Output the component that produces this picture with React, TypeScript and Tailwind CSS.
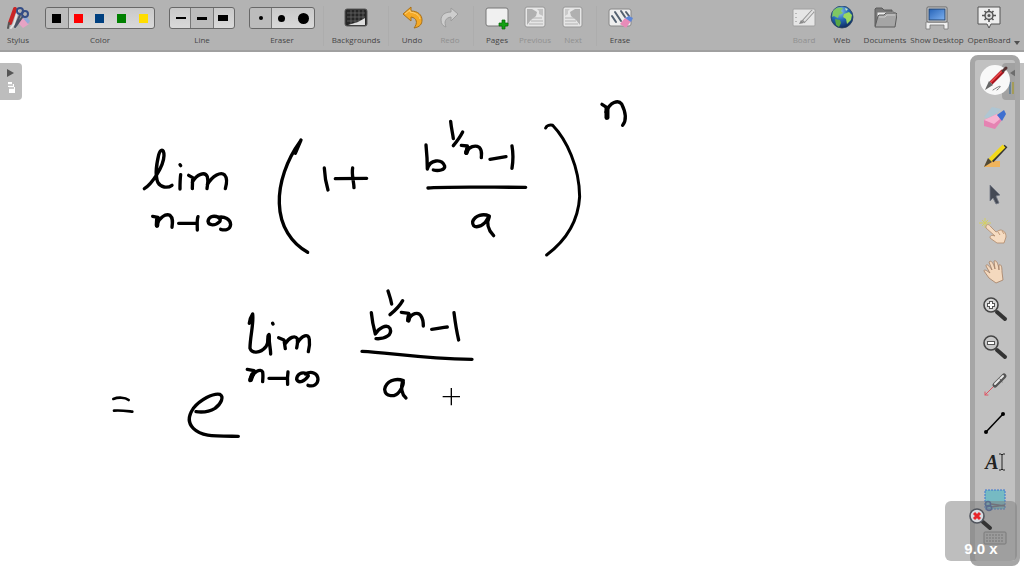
import type { ReactNode } from "react";

function StylusIcon() {
  return (
    <svg viewBox="0 0 24 24" className="size-6" fill="none" strokeLinecap="round">
      <path d="M12 17L17 12L23 18L17 22Z" fill="#e6a3c4" />
      <path d="M17 12L20 10L24 15L22 18Z" fill="#8fa9d8" />
      <path d="M9 3L4 17" stroke="#c92525" strokeWidth="4" />
      <path d="M3 17L2 22" stroke="#555" strokeWidth="2" />
      <path d="M12 4L8 18L5 22" stroke="#e5e5e5" strokeWidth="2" />
      <path d="M14 9L9 21M17 10L10 20" stroke="#4a5365" strokeWidth="2" />
      <circle cx="14" cy="5" r="3" stroke="#344d86" strokeWidth="2" />
      <circle cx="19" cy="8" r="3" stroke="#344d86" strokeWidth="2" />
    </svg>
  );
}

function BackgroundsIcon() {
  return (
    <svg viewBox="0 0 24 24" className="size-6">
      <rect x="1" y="3" width="22" height="17" rx="2" fill="#262626" stroke="#5a5a5a" />
      <path d="M3 7H21M3 11H21M3 15H17M7 4V19M11 4V18M15 4V17M19 4V13" stroke="#666" strokeWidth="0.8" />
      <path d="M4 19L14 16L21 12V19Z" fill="#dedede" />
    </svg>
  );
}

function UndoIcon() {
  return (
    <svg viewBox="0 0 24 24" className="size-6">
      <path
        d="M3 8L11 1V5C18 5 22 9 22 14C22 18 20 21 14 22C18 17 17 12 11 11V15Z"
        fill="#f5a925"
        stroke="#a87018"
        strokeLinejoin="round"
      />
      <path d="M5 8L10 4V6C16 7 19 9 20 13" fill="none" stroke="#ffd27a" />
    </svg>
  );
}

function RedoIcon() {
  return (
    <svg viewBox="0 0 24 24" className="size-6">
      <path
        d="M20 8L13 2V6C7 6 3 9 3 14C3 18 5 20 8 21C6 16 7 12 13 11V15Z"
        fill="#cdcdcd"
        stroke="#9c9c9c"
        strokeLinejoin="round"
      />
    </svg>
  );
}

function PagesIcon() {
  return (
    <svg viewBox="0 0 26 24" className="h-6 w-[26px]">
      <rect x="2" y="2" width="22" height="18" rx="2" fill="#f0f0f0" stroke="#777" />
      <path d="M18 14H21V17H24V20H21V23H18V20H15V17H18Z" fill="#12a012" stroke="#076507" strokeWidth="0.7" />
    </svg>
  );
}

function PreviousIcon() {
  return (
    <svg viewBox="0 0 24 24" className="size-6">
      <rect x="2" y="1" width="20" height="20" rx="2" fill="#e6e6e6" stroke="#999" />
      <path d="M4 3H9L14 6L13 10L8 14L4 19Z" fill="#b0b0b0" />
      <path d="M14 3H20V10L16 8V5Z" fill="#c2c2c2" />
      <path d="M10 12H19M8 15H20M6 18H20" stroke="#b2b2b2" strokeWidth="1" />
    </svg>
  );
}

function NextIcon() {
  return (
    <svg viewBox="0 0 24 24" className="size-6">
      <rect x="2" y="1" width="19" height="20" rx="2" fill="#e6e6e6" stroke="#999" />
      <path d="M19 3H14L9 6L10 10L15 14L19 19Z" fill="#b0b0b0" />
      <path d="M9 3H4V10L7 8V5Z" fill="#c9c9c9" />
      <path d="M4 12H13M4 15H15M4 18H17" stroke="#b2b2b2" strokeWidth="1" />
    </svg>
  );
}

function EraseIcon() {
  return (
    <svg viewBox="0 0 26 24" className="h-6 w-[26px]">
      <rect x="2" y="3" width="22" height="17" rx="2" fill="#eee" stroke="#888" />
      <path d="M5 10L9 16M8 6L14 15M14 5L18 11M19 6L22 10" stroke="#53606f" strokeWidth="2" strokeLinecap="round" />
      <path d="M13 18L18 12L24 15L19 22Z" fill="#e88cb9" />
      <path d="M18 12L22 10L26 12L24 16Z" fill="#5d86d8" />
    </svg>
  );
}

function BoardIcon() {
  return (
    <svg viewBox="0 0 24 24" className="size-6">
      <rect x="1" y="3" width="22" height="17" rx="1" fill="#e6e6e6" stroke="#a0a0a0" />
      <path d="M4 7V8M4 11V12M4 15V16" stroke="#888" strokeWidth="1" />
      <path d="M21 5L11 16" stroke="#929292" strokeWidth="4" />
      <path d="M21 5L12 15" stroke="#e2e2e2" strokeWidth="2" />
      <path d="M9 14L12 17L7 18Z" fill="#888" />
    </svg>
  );
}

function WebIcon() {
  return (
    <svg viewBox="0 0 24 24" className="size-6">
      <defs>
        <radialGradient id="globe" cx="0.4" cy="0.25" r="0.8">
          <stop offset="0" stopColor="#8cc3f2" />
          <stop offset="0.5" stopColor="#2467b4" />
          <stop offset="1" stopColor="#0b2454" />
        </radialGradient>
      </defs>
      <circle cx="12" cy="11" r="11" fill="url(#globe)" stroke="#27415f" strokeWidth="0.8" />
      <path d="M3 5C6 1 10 1 13 2L11 5L13 7L9 9L8 12L4 10L2 11Z" fill="#7fc763" />
      <path d="M5 13L10 14L11 17L9 21L6 19Z" fill="#58a743" />
      <path d="M14 8L19 6L22 9L21 14L17 18L16 13L13 11Z" fill="#9ad85f" />
      <path d="M15 2L18 3L16 5Z" fill="#c8e6c0" />
    </svg>
  );
}

function DocumentsIcon() {
  return (
    <svg viewBox="0 0 24 24" className="size-6">
      <path d="M2 20V3L3 2H9L11 4H19V8" fill="#777" stroke="#5c5c5c" strokeLinejoin="round" />
      <path d="M4 18V6H21V18" fill="#ededed" stroke="#777" />
      <path d="M2 21L5 10L6 9H11L13 7H23L24 8L22 21Z" fill="#a5a5a5" stroke="#5c5c5c" strokeLinejoin="round" />
      <path d="M6 11H12L14 9H22" fill="none" stroke="#ccc" />
    </svg>
  );
}

function DesktopIcon() {
  return (
    <svg viewBox="0 0 24 24" className="size-6">
      <defs>
        <linearGradient id="screen" x1="0" y1="0" x2="1" y2="1">
          <stop offset="0" stopColor="#2563b8" />
          <stop offset="1" stopColor="#80b2f0" />
        </linearGradient>
      </defs>
      <path d="M1 16H23V23H19V19H5V23H1Z" fill="#f0f0f0" stroke="#777" strokeWidth="0.8" />
      <rect x="2" y="1" width="20" height="15" rx="1" fill="#d8d8d8" stroke="#666" />
      <rect x="4" y="3" width="16" height="11" fill="url(#screen)" stroke="#24446f" />
    </svg>
  );
}

function OpenBoardIcon() {
  return (
    <svg viewBox="0 0 24 24" className="size-6">
      <path d="M1 1H23V18H14L12 22L10 18H1Z" fill="#eee" stroke="#555" strokeLinejoin="round" />
      <path d="M12 3V16M5 9.500H19M7.500 5L16.500 14M16.500 5L7.500 14" stroke="#555" strokeWidth="1.600" />
      <circle cx="12" cy="9.500" r="4" fill="#ddd" stroke="#555" strokeWidth="1.500" />
      <circle cx="12" cy="9.500" r="1.500" fill="#555" />
    </svg>
  );
}

type ToolProps = { label: string; icon: ReactNode; width: string; disabled?: boolean };

function Tool({ label, icon, width, disabled }: ToolProps) {
  return (
    <button
      type="button"
      disabled={disabled}
      className={`flex shrink-0 flex-col items-center gap-1 text-[#454545] disabled:text-[#909090] ${width}`}
    >
      <span className="flex h-6 items-center">{icon}</span>
      <span className="whitespace-nowrap text-[8px] leading-3">{label}</span>
    </button>
  );
}

type Option = { name: string; mark: string };

function OptionGroup({ label, options, selected, width }: { label: string; options: Option[]; selected: number; width: string }) {
  return (
    <div role="group" aria-label={label} className={`flex shrink-0 flex-col items-center gap-1 ${width}`}>
      <div className="flex h-6 w-full items-center">
        <div className="flex w-full overflow-hidden rounded-[3px] border border-[#686868] bg-linear-to-b from-[#c9c9c9] to-[#d9d9d9]">
          {options.map((o, i) => (
            <button
              key={o.name}
              type="button"
              aria-label={o.name}
              aria-pressed={i === selected}
              className={`flex h-5 flex-1 items-center justify-center ${
                i === selected ? "bg-[#bcbcbc] shadow-[0_0_0_1px_#777]" : ""
              }`}
            >
              <span className={o.mark} />
            </button>
          ))}
        </div>
      </div>
      <span className="text-[8px] leading-3 text-[#454545]">{label}</span>
    </div>
  );
}

const colors: Option[] = [
  { name: "Black", mark: "size-[9px] bg-black" },
  { name: "Red", mark: "size-[9px] bg-[#ff0000]" },
  { name: "Blue", mark: "size-[9px] bg-[#004080]" },
  { name: "Green", mark: "size-[9px] bg-[#008000]" },
  { name: "Yellow", mark: "size-[9px] bg-[#ffdd00]" },
];

const lines: Option[] = [
  { name: "Fine line", mark: "h-[2px] w-[10px] bg-black" },
  { name: "Medium line", mark: "h-[3px] w-[10px] bg-black" },
  { name: "Strong line", mark: "h-[6px] w-[10px] bg-black" },
];

const erasers: Option[] = [
  { name: "Small eraser", mark: "size-[4px] rounded-full bg-black" },
  { name: "Medium eraser", mark: "size-[7px] rounded-full bg-black" },
  { name: "Large eraser", mark: "size-[11px] rounded-full bg-black" },
];

function Divider() {
  return <div className="mx-1 h-10 w-px shrink-0 bg-[#adadad]" />;
}

function Toolbar() {
  return (
    <header className="flex h-[52px] shrink-0 items-start border-b-2 border-[#a0a0a0] bg-[#b3b3b3] pt-[6px]">
      <Tool label="Stylus" icon={<StylusIcon />} width="w-9" />
      <div className="ml-[9px] flex gap-[14px]">
        <OptionGroup label="Color" options={colors} selected={0} width="w-[110px]" />
        <OptionGroup label="Line" options={lines} selected={1} width="w-[66px]" />
        <OptionGroup label="Eraser" options={erasers} selected={0} width="w-[66px]" />
      </div>
      <div className="ml-1 flex">
        <Divider />
        <Tool label="Backgrounds" icon={<BackgroundsIcon />} width="w-14" />
        <Divider />
        <Tool label="Undo" icon={<UndoIcon />} width="w-[38px]" />
        <Tool label="Redo" icon={<RedoIcon />} width="w-[38px]" disabled />
        <Divider />
        <Tool label="Pages" icon={<PagesIcon />} width="w-[38px]" />
        <Tool label="Previous" icon={<PreviousIcon />} width="w-[38px]" disabled />
        <Tool label="Next" icon={<NextIcon />} width="w-[38px]" disabled />
        <Divider />
        <Tool label="Erase" icon={<EraseIcon />} width="w-[38px]" />
      </div>
      <div className="ml-auto flex">
        <Tool label="Board" icon={<BoardIcon />} width="w-[38px]" disabled />
        <Tool label="Web" icon={<WebIcon />} width="w-[38px]" />
        <Tool label="Documents" icon={<DocumentsIcon />} width="w-12" />
        <Tool label="Show Desktop" icon={<DesktopIcon />} width="w-14" />
        <Tool label="OpenBoard" icon={<OpenBoardIcon />} width="w-12" />
        <svg viewBox="0 0 8 6" className="mt-[34px] mr-[3px] h-[6px] w-2">
          <path d="M1 1H7L4 5Z" fill="#505050" />
        </svg>
      </div>
    </header>
  );
}

function Ink() {
  return (
    <svg
      viewBox="0 52 1024 524"
      preserveAspectRatio="xMinYMin meet"
      className="w-full"
      fill="none"
      stroke="#000"
      strokeWidth="10"
      strokeLinecap="round"
      strokeLinejoin="round"
    >
      <g transform="translate(130 120) scale(0.3333)">
        <path d="M43 206C65 193 101 140 102 107C102 84 91 86 86 105C80 130 75 170 84 188C92 202 112 206 126 196" />
        <path d="M152 164C150 180 150 195 150 207M150 134L152 137" />
        <path d="M176 166L188 173L187 206M187 187C200 162 225 154 232 170C236 183 232 195 231 206M232 194C248 166 273 154 284 165C293 175 290 192 286 206" />
        <path d="M68 289L84 292C84 303 78 308 81 318M80 314C90 292 106 280 120 286C130 294 128 308 126 322" />
        <path d="M82 298L81 316" strokeWidth="14" />
        <path d="M146 310H200M204 290C200 300 202 318 202 330" />
        <path d="M266 292C248 284 236 292 234 304C236 318 256 318 270 304C272 298 270 294 264 292C284 288 302 298 302 314C300 330 285 332 272 328" />
        <path d="M513 60L496 100M511 64C470 120 446 190 448 250C450 320 485 370 533 397" />
        <path d="M583 144C584 165 588 190 594 210M616 176L710 175M668 144C664 165 672 185 672 203" />
      </g>
      <g transform="translate(390 80) scale(0.3333)">
        <path d="M108 195C110 215 112 240 112 267C120 238 155 235 164 258C166 270 145 274 130 270" />
        <path d="M182 124C184 145 188 160 190 176M218 156C210 172 200 185 190 197" />
        <path d="M214 196L232 198L228 220M228 216C238 200 255 194 268 202C278 212 274 222 274 233" />
        <path d="M234 204L229 218" strokeWidth="14" />
        <path d="M300 238L348 230M366 198C370 220 370 240 366 265" />
        <path d="M114 324C160 319 300 322 407 322" />
        <path d="M298 408C280 400 255 405 248 425C246 447 270 443 285 428C295 415 297 405 298 410C288 430 295 450 311 467" />
        <path d="M467 144C470 136 480 134 488 136C530 180 568 260 569 350C565 420 530 480 470 525" strokeWidth="9" />
        <path d="M636 73L650 82L650 114M648 96C660 66 685 58 695 72C708 98 712 118 698 136" />
        <path d="M651 86V112" strokeWidth="15" />
      </g>
      <g transform="translate(90 280) scale(0.3333)">
        <path d="M478 130C480 115 486 105 488 102C492 130 480 170 480 205C485 220 510 222 528 200C534 190 536 175 537 163C536 185 542 205 542 222M548 130L549 132" />
        <path d="M536 168L535 192" strokeWidth="14" />
        <path d="M566 173L582 180L586 206M586 191C598 172 615 165 622 176C624 188 622 195 620 204M622 190C636 164 656 160 658 178C660 192 658 205 655 215" />
        <path d="M472 268L492 272C490 285 478 290 480 302C490 275 512 264 518 276C520 290 518 298 518 305" />
        <path d="M487 284L482 299" strokeWidth="14" />
        <path d="M537 295H590M594 276C592 290 592 300 593 313" />
        <path d="M650 281C634 274 620 284 620 298C626 312 645 304 655 288C654 280 650 280 646 282C666 270 684 282 684 298C684 312 670 322 654 316" />
        <path d="M70 357C85 351 105 352 116 360M72 392C90 390 110 393 127 395" strokeWidth="8" />
        <path d="M318 395C340 398 360 394 375 385C395 370 402 350 390 343C370 338 330 360 310 385C293 410 295 430 310 445C335 470 370 468 445 469" />
      </g>
      <g transform="translate(340 280) scale(0.3333)">
        <path d="M94 98C96 120 100 140 106 162C115 145 140 130 150 145C158 165 135 178 108 176" />
        <path d="M144 33C148 45 152 55 155 72M188 62C178 80 165 92 150 104" />
        <path d="M184 97L206 100L204 122C215 98 235 95 243 108C250 118 250 128 250 138" />
        <path d="M208 106L205 121" strokeWidth="14" />
        <path d="M275 148C290 148 305 142 322 141M342 98C346 130 350 155 356 180" />
        <path d="M66 214C150 218 240 236 396 238" />
        <path d="M190 302C165 292 138 305 134 328C136 352 165 352 178 335C190 320 192 305 188 302C183 320 184 342 198 354" />
        <path d="M334 324V376M308 350H360" strokeWidth="4" strokeLinecap="butt" />
      </g>
    </svg>
  );
}

const glyph = "size-[26px] overflow-visible";

const palette: { name: string; icon: ReactNode }[] = [
  {
    name: "Pen",
    icon: (
      <svg viewBox="0 0 30 30" className="size-[30px]" fill="none" strokeLinecap="round">
        <circle cx="15" cy="15" r="15" fill="#f8f8f8" />
        <path d="M13 25C22 19 22 21 17 25" stroke="#777" />
        <path d="M23 6L11 18" stroke="#a81520" strokeWidth="4" strokeLinecap="butt" />
        <path d="M22 6L11 17" stroke="#f04a4a" strokeWidth="1.500" />
        <path d="M26 3L23 6" stroke="#533" strokeWidth="3" />
        <path d="M9 16L13 20L5 25Z" fill="#666" />
      </svg>
    ),
  },
  {
    name: "Eraser",
    icon: (
      <svg viewBox="0 0 26 26" className={glyph}>
        <path d="M10 2L19 4L9 15L2 12Z" fill="#9ecbe5" opacity="0.5" />
        <path d="M2 15L15 9L20 15L13 24L2 21Z" fill="#e583b2" />
        <path d="M2 15L15 9L18 14L12 19Z" fill="#f6b4d2" />
        <path d="M15 10L22 5L24 9L20 16Z" fill="#3e70d0" />
      </svg>
    ),
  },
  {
    name: "Highlighter",
    icon: (
      <svg viewBox="0 0 26 26" className={glyph}>
        <path d="M5 18H18V24H2Z" fill="#f0b45c" />
        <path d="M24 3L10 18" stroke="#333" strokeWidth="4" />
        <path d="M22 3L8 17" stroke="#f2d91b" strokeWidth="4" />
        <path d="M6 15L10 19L2 24Z" fill="#514a37" />
      </svg>
    ),
  },
  {
    name: "Select",
    icon: (
      <svg viewBox="0 0 26 26" className={glyph}>
        <path d="M8 3L18 13L14 14L17 21L14 22L11 16L8 19Z" fill="#454a55" stroke="#747985" strokeWidth="0.8" />
      </svg>
    ),
  },
  {
    name: "Interact",
    icon: (
      <svg viewBox="0 0 26 26" className={glyph}>
        <path d="M3 -2V8M-3 3H9M0 0L6 6M6 0L0 6" stroke="#d4cf61" strokeWidth="1" />
        <path
          d="M4 6C5 4 7 4 9 7L14 12L18 10C22 10 24 13 24 17L22 23L15 23L8 18C8 15 10 15 13 16L4 8Z"
          fill="#f6dcc2"
          stroke="#b08969"
          strokeWidth="0.8"
        />
        <path d="M16 12L18 15M20 11L22 14" stroke="#c39c7a" />
      </svg>
    ),
  },
  {
    name: "Scroll page",
    icon: (
      <svg viewBox="0 0 26 26" className={glyph}>
        <path
          d="M7 20L2 13C2 11 4 12 8 15L4 8C4 6 6 6 10 12L7 4C9 2 11 4 13 11L12 3C14 2 16 4 17 12L17 7C19 6 20 8 20 14L21 22L14 25Z"
          fill="#f4d9be"
          stroke="#a37f65"
          strokeWidth="0.8"
          strokeLinejoin="round"
        />
      </svg>
    ),
  },
  {
    name: "Zoom in",
    icon: (
      <svg viewBox="0 0 26 26" className={glyph} fill="none" strokeLinecap="round">
        <path d="M15 16L23 23" stroke="#333" strokeWidth="4" />
        <circle cx="9" cy="9" r="7" fill="#d8d8d8" stroke="#454545" strokeWidth="1.600" />
        <path d="M9 5V13M5 9H13" stroke="#555" strokeWidth="4" strokeLinecap="butt" />
        <path d="M9 6V12M6 9H12" stroke="#fff" strokeWidth="2" strokeLinecap="butt" />
      </svg>
    ),
  },
  {
    name: "Zoom out",
    icon: (
      <svg viewBox="0 0 26 26" className={glyph} fill="none" strokeLinecap="round">
        <path d="M15 16L23 23" stroke="#333" strokeWidth="4" />
        <circle cx="9" cy="9" r="7" fill="#c8c8c8" stroke="#454545" strokeWidth="1.600" />
        <path d="M5 9H13" stroke="#555" strokeWidth="4" strokeLinecap="butt" />
        <path d="M6 9H12" stroke="#fff" strokeWidth="2" strokeLinecap="butt" />
      </svg>
    ),
  },
  {
    name: "Laser pointer",
    icon: (
      <svg viewBox="0 0 26 26" className={glyph} fill="none" strokeLinecap="round">
        <path d="M3 23L12 14M3 20V23H6" stroke="#e05262" />
        <path d="M22 4L13 13" stroke="#555" strokeWidth="5" />
        <path d="M21 4L13 12" stroke="#e8e8e8" strokeWidth="2" />
        <path d="M18 7L20 10" stroke="#555" />
      </svg>
    ),
  },
  {
    name: "Draw line",
    icon: (
      <svg viewBox="0 0 26 26" className={glyph}>
        <path d="M4 22L21 4" stroke="#000" strokeWidth="1.500" />
        <circle cx="4" cy="22" r="2" />
        <circle cx="21" cy="4" r="2" />
      </svg>
    ),
  },
  {
    name: "Write text",
    icon: (
      <span className="flex items-center font-['Liberation_Serif',serif] text-[20px] leading-6 text-[#222]">
        <i className="font-bold">A</i>
        <svg viewBox="0 0 6 18" className="h-[18px] w-[6px]" fill="none" stroke="#222">
          <path d="M0 1H2L3 2L4 1H6M3 2V16M0 17H2L3 16L4 17H6" />
        </svg>
      </span>
    ),
  },
  {
    name: "Capture part of the screen",
    icon: (
      <svg viewBox="0 0 26 26" className={glyph}>
        <rect x="3" y="3" width="20" height="19" fill="#76bac3" stroke="#3b75d0" strokeDasharray="2 1" />
        <path d="M9 17L23 19M9 20L23 18" stroke="#667" strokeWidth="1.500" />
        <circle cx="6" cy="17" r="2.500" fill="none" stroke="#39599c" strokeWidth="1.500" />
        <circle cx="7" cy="21" r="2.500" fill="none" stroke="#39599c" strokeWidth="1.500" />
      </svg>
    ),
  },
  {
    name: "Virtual keyboard",
    icon: (
      <svg viewBox="0 0 26 26" className={glyph}>
        <rect x="2" y="7" width="22" height="12" rx="1" fill="#b8b8b8" stroke="#777" />
        <path d="M4 10H22M4 13H22M4 16H22" stroke="#707070" strokeWidth="1" strokeDasharray="2 1" />
      </svg>
    ),
  },
];

function Palette() {
  return (
    <nav
      aria-label="Drawing tools"
      className="absolute top-[3px] right-1 bottom-[10px] flex w-[50px] flex-col rounded-lg border-[5px] border-[#a6a6a6] bg-[#848484]/50 pt-px pb-1"
    >
      {palette.map((tool) => (
        <button key={tool.name} type="button" aria-label={tool.name} className="flex min-h-0 flex-1 items-center justify-center">
          {tool.icon}
        </button>
      ))}
    </nav>
  );
}

function ZoomBadge() {
  return (
    <div className="absolute right-[7px] bottom-[15px] flex h-[60px] w-[72px] flex-col items-center justify-between rounded-md bg-[#7e7e7e]/50 pt-[5px]">
      <svg viewBox="0 0 26 26" className="size-[26px]" fill="none" strokeLinecap="round">
        <path d="M15 16L22 22" stroke="#333" strokeWidth="4" />
        <circle cx="9" cy="10" r="7" fill="#d8dbe0" stroke="#52565e" strokeWidth="1.600" />
        <path d="M6 7L12 13M12 7L6 13" stroke="#e8252b" strokeWidth="3" strokeLinecap="butt" />
      </svg>
      <span className="font-['Liberation_Sans',sans-serif] text-[15px] leading-6 font-bold text-white">9.0 x</span>
    </div>
  );
}

export default function App() {
  return (
    <div className="flex min-h-screen flex-col overflow-hidden bg-white font-['Open_Sans','Noto_Sans',sans-serif]">
      <Toolbar />
      <main className="relative flex-1">
        <Ink />
        <button
          type="button"
          aria-label="Show pages"
          className="absolute top-[11px] left-0 flex h-[37px] w-[22px] items-center justify-center rounded-r-[4px] bg-[#bdbdbd]"
        >
          <svg viewBox="0 0 12 28" className="h-7 w-3">
            <path d="M2 1L9 5L2 9Z" fill="#555" />
            <path d="M3 14H7V16H9V19H10V25H4V19H3Z" fill="#fff" />
            <path d="M3 17H8M4 20H9" stroke="#999" />
          </svg>
        </button>
        <button
          type="button"
          aria-label="Show library"
          className="absolute top-[11px] right-0 flex h-[37px] w-[22px] items-center justify-center rounded-l-[4px] bg-[#848484]/50"
        >
          <svg viewBox="0 0 12 28" className="h-7 w-3">
            <path d="M9 1L3 5L9 9Z" fill="#555" />
            <path d="M2 14H4V26H2Z" fill="#4d80a8" />
            <path d="M5 14H7V26H5Z" fill="#c5b52f" />
            <path d="M8 16H10V26H8Z" fill="#eee" />
          </svg>
        </button>
        <Palette />
        <ZoomBadge />
      </main>
    </div>
  );
}
